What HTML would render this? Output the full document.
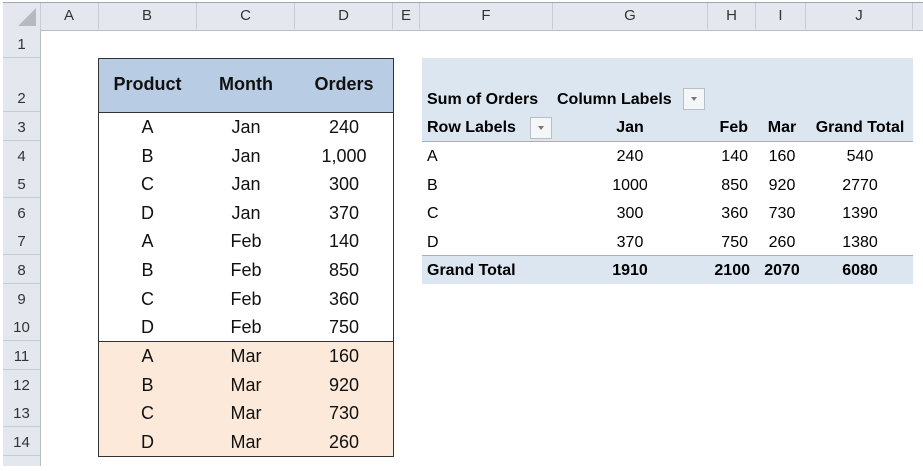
<!DOCTYPE html>
<html><head><meta charset="utf-8"><style>
body{margin:0;width:923px;height:471px;background:#fff;position:relative;overflow:hidden;font-family:"Liberation Sans",sans-serif;}
.a{position:absolute;}
.hd{position:absolute;top:3px;height:26px;line-height:26px;text-align:center;color:#333;font-size:15px;border-right:1px solid #c6ccd4;}
.rh{position:absolute;left:3px;width:37px;text-align:center;color:#333;font-size:15px;border-bottom:1px solid #c6ccd4;background:#e4e8ee;}
.c{position:absolute;text-align:center;font-size:18px;color:#111;}
.p{position:absolute;font-size:16px;color:#000;}
.b{font-weight:bold;}
.dd{position:absolute;width:20px;height:20px;border:1px solid #b8bec6;background:#f4f6f8;}
.dd:after{content:"";position:absolute;left:7px;top:8px;border-left:3px solid transparent;border-right:3px solid transparent;border-top:4px solid #777;}
</style></head><body>
<div class="a" style="left:3px;top:2px;width:920px;height:27px;background:#e4e8ee;border-top:1px solid #a0a6ae;border-bottom:1px solid #b8bec6"></div>
<div class="a" style="left:3px;top:29px;width:37px;height:437px;background:#e4e8ee;border-right:1px solid #b8bec6"></div>
<svg class="a" style="left:18px;top:8px" width="18" height="18"><polygon points="18,0 18,18 0,18" fill="#b5bac1"/></svg>
<div class="hd" style="left:3px;width:37px"></div>
<div class="hd" style="left:40px;width:58px">A</div>
<div class="hd" style="left:98px;width:98px">B</div>
<div class="hd" style="left:197px;width:97px">C</div>
<div class="hd" style="left:295px;width:97px">D</div>
<div class="hd" style="left:393px;width:26px">E</div>
<div class="hd" style="left:420px;width:132px">F</div>
<div class="hd" style="left:553px;width:154px">G</div>
<div class="hd" style="left:708px;width:47px">H</div>
<div class="hd" style="left:756px;width:49px">I</div>
<div class="hd" style="left:806px;width:106px">J</div>

<div class="rh" style="top:29px;height:28px;line-height:32px">1</div>
<div class="rh" style="top:58px;height:53px;line-height:82px">2</div>
<div class="rh" style="top:112px;height:28px;line-height:32px">3</div>
<div class="rh" style="top:141px;height:28px;line-height:32px">4</div>
<div class="rh" style="top:169px;height:28px;line-height:32px">5</div>
<div class="rh" style="top:198px;height:28px;line-height:32px">6</div>
<div class="rh" style="top:226px;height:28px;line-height:32px">7</div>
<div class="rh" style="top:255px;height:28px;line-height:32px">8</div>
<div class="rh" style="top:284px;height:28px;line-height:32px">9</div>
<div class="rh" style="top:312px;height:28px;line-height:32px">10</div>
<div class="rh" style="top:341px;height:28px;line-height:32px">11</div>
<div class="rh" style="top:370px;height:28px;line-height:32px">12</div>
<div class="rh" style="top:398px;height:28px;line-height:32px">13</div>
<div class="rh" style="top:427px;height:28px;line-height:32px">14</div>

<div class="a" style="left:98px;top:58px;width:294px;height:53px;background:#b8cce4;border:1px solid #333"></div>
<div class="a" style="left:98px;top:341px;width:294px;height:114px;background:#fde9d9;border:1px solid #333"></div>
<div class="a" style="left:98px;top:58px;width:294px;height:397px;border:1px solid #333"></div>
<div class="c b" style="left:98px;width:99px;top:74px">Product</div>
<div class="c b" style="left:197px;width:98px;top:74px">Month</div>
<div class="c b" style="left:295px;width:98px;top:74px">Orders</div>

<div class="c" style="left:98px;width:99px;top:117px">A</div><div class="c" style="left:197px;width:98px;top:117px">Jan</div><div class="c" style="left:295px;width:98px;top:117px">240</div>
<div class="c" style="left:98px;width:99px;top:146px">B</div><div class="c" style="left:197px;width:98px;top:146px">Jan</div><div class="c" style="left:295px;width:98px;top:146px">1,000</div>
<div class="c" style="left:98px;width:99px;top:174px">C</div><div class="c" style="left:197px;width:98px;top:174px">Jan</div><div class="c" style="left:295px;width:98px;top:174px">300</div>
<div class="c" style="left:98px;width:99px;top:203px">D</div><div class="c" style="left:197px;width:98px;top:203px">Jan</div><div class="c" style="left:295px;width:98px;top:203px">370</div>
<div class="c" style="left:98px;width:99px;top:231px">A</div><div class="c" style="left:197px;width:98px;top:231px">Feb</div><div class="c" style="left:295px;width:98px;top:231px">140</div>
<div class="c" style="left:98px;width:99px;top:260px">B</div><div class="c" style="left:197px;width:98px;top:260px">Feb</div><div class="c" style="left:295px;width:98px;top:260px">850</div>
<div class="c" style="left:98px;width:99px;top:289px">C</div><div class="c" style="left:197px;width:98px;top:289px">Feb</div><div class="c" style="left:295px;width:98px;top:289px">360</div>
<div class="c" style="left:98px;width:99px;top:317px">D</div><div class="c" style="left:197px;width:98px;top:317px">Feb</div><div class="c" style="left:295px;width:98px;top:317px">750</div>
<div class="c" style="left:98px;width:99px;top:346px">A</div><div class="c" style="left:197px;width:98px;top:346px">Mar</div><div class="c" style="left:295px;width:98px;top:346px">160</div>
<div class="c" style="left:98px;width:99px;top:375px">B</div><div class="c" style="left:197px;width:98px;top:375px">Mar</div><div class="c" style="left:295px;width:98px;top:375px">920</div>
<div class="c" style="left:98px;width:99px;top:403px">C</div><div class="c" style="left:197px;width:98px;top:403px">Mar</div><div class="c" style="left:295px;width:98px;top:403px">730</div>
<div class="c" style="left:98px;width:99px;top:432px">D</div><div class="c" style="left:197px;width:98px;top:432px">Mar</div><div class="c" style="left:295px;width:98px;top:432px">260</div>

<div class="a" style="left:422px;top:58px;width:491px;height:83px;background:#dce6f1;border-bottom:1px solid #95b3d7"></div>
<div class="a" style="left:422px;top:255px;width:491px;height:28px;background:#dce6f1;border-top:1px solid #95b3d7"></div>
<div class="p b" style="left:427px;top:91px">Sum of Orders</div>
<div class="p b" style="left:557px;top:91px">Column Labels</div>
<div class="dd" style="left:683px;top:88px"></div>
<div class="p b" style="left:427px;top:119px">Row Labels</div>
<div class="dd" style="left:530px;top:117px"></div>
<div class="p b" style="left:600px;width:60px;text-align:center;top:119px">Jan</div>
<div class="p b" style="left:700px;width:48px;text-align:right;top:119px">Feb</div>
<div class="p b" style="left:760px;width:44px;text-align:center;top:119px">Mar</div>
<div class="p b" style="left:806px;width:108px;text-align:center;top:119px">Grand Total</div>

<div class="p" style="left:427px;top:148px">A</div><div class="p" style="left:600px;width:60px;text-align:center;top:148px">240</div><div class="p" style="left:700px;width:48px;text-align:right;top:148px">140</div><div class="p" style="left:760px;width:44px;text-align:center;top:148px">160</div><div class="p" style="left:806px;width:108px;text-align:center;top:148px">540</div>
<div class="p" style="left:427px;top:177px">B</div><div class="p" style="left:600px;width:60px;text-align:center;top:177px">1000</div><div class="p" style="left:700px;width:48px;text-align:right;top:177px">850</div><div class="p" style="left:760px;width:44px;text-align:center;top:177px">920</div><div class="p" style="left:806px;width:108px;text-align:center;top:177px">2770</div>
<div class="p" style="left:427px;top:205px">C</div><div class="p" style="left:600px;width:60px;text-align:center;top:205px">300</div><div class="p" style="left:700px;width:48px;text-align:right;top:205px">360</div><div class="p" style="left:760px;width:44px;text-align:center;top:205px">730</div><div class="p" style="left:806px;width:108px;text-align:center;top:205px">1390</div>
<div class="p" style="left:427px;top:234px">D</div><div class="p" style="left:600px;width:60px;text-align:center;top:234px">370</div><div class="p" style="left:700px;width:48px;text-align:right;top:234px">750</div><div class="p" style="left:760px;width:44px;text-align:center;top:234px">260</div><div class="p" style="left:806px;width:108px;text-align:center;top:234px">1380</div>
<div class="p b" style="left:427px;top:262px">Grand Total</div><div class="p b" style="left:600px;width:60px;text-align:center;top:262px">1910</div><div class="p b" style="left:700px;width:50px;text-align:right;top:262px">2100</div><div class="p b" style="left:758px;width:48px;text-align:center;top:262px">2070</div><div class="p b" style="left:806px;width:108px;text-align:center;top:262px">6080</div>
</body></html>
